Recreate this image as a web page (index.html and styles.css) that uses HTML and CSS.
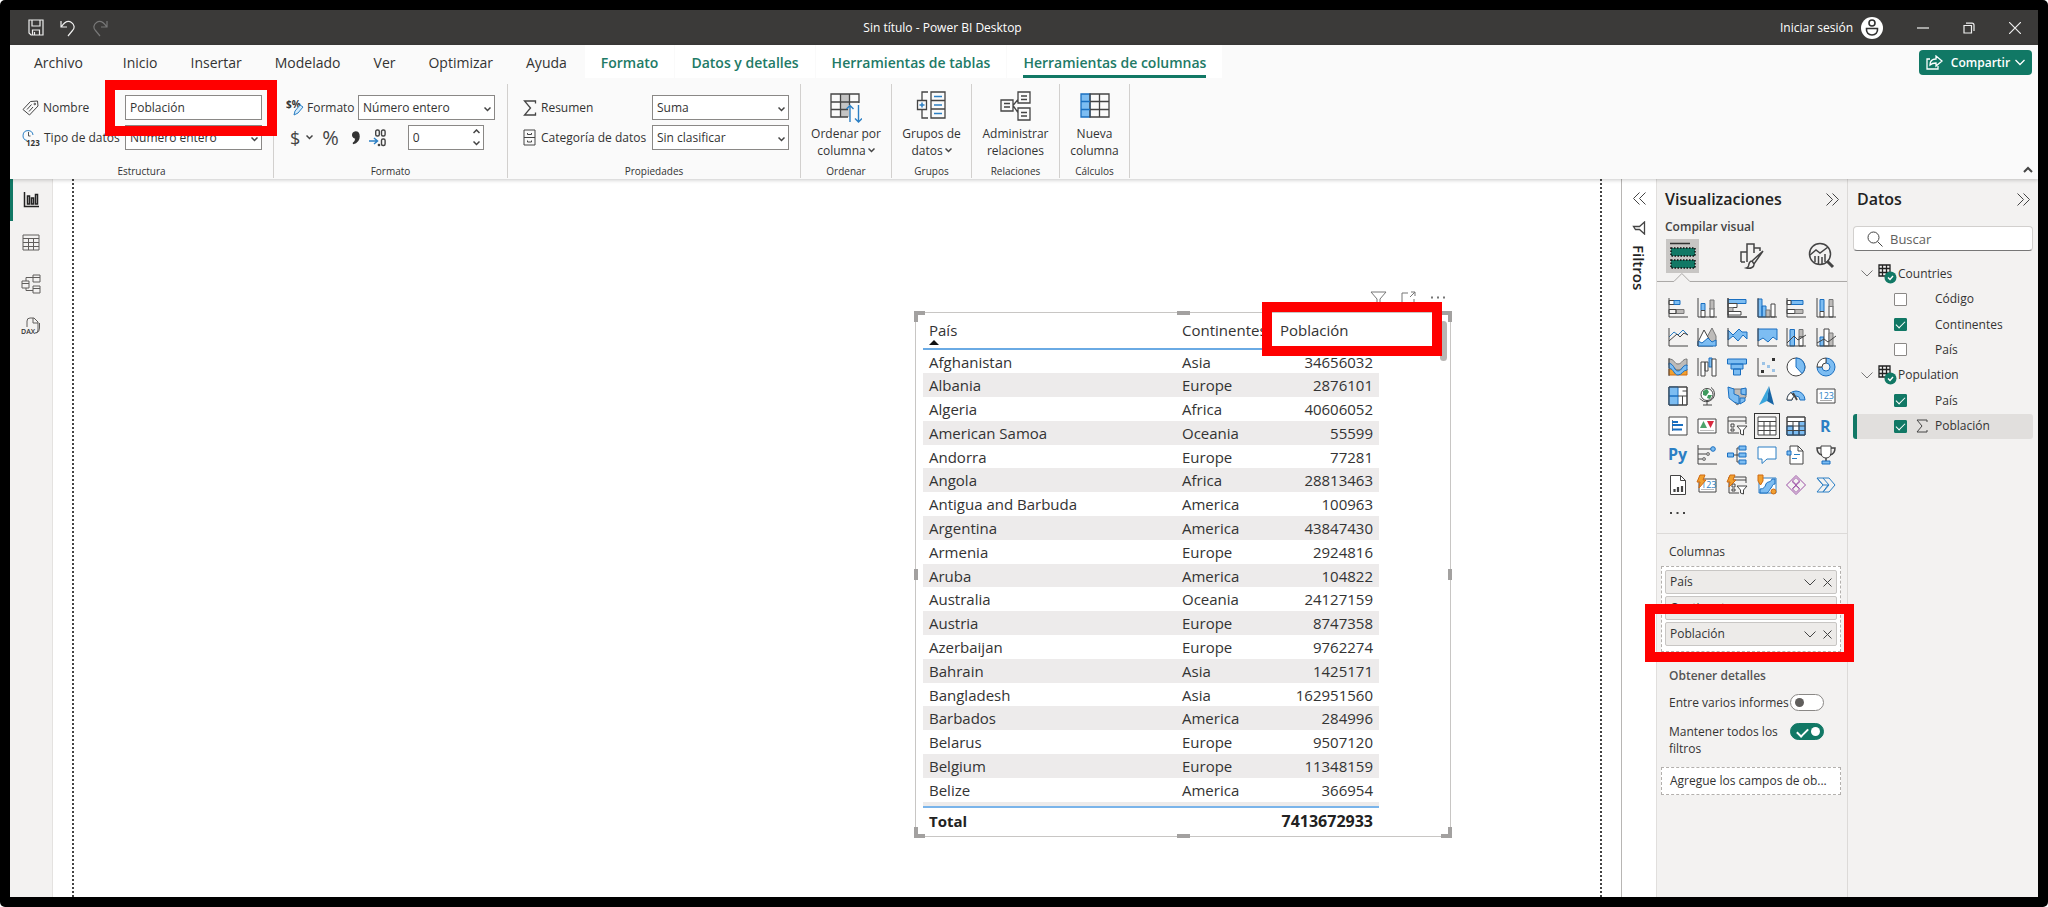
FILE: index.html
```html
<!DOCTYPE html>
<html lang="es">
<head>
<meta charset="utf-8">
<title>Sin título - Power BI Desktop</title>
<link rel="stylesheet" href="styles.css">
</head>
<body>
<div class="window">
  <header class="titlebar">
    <div class="quick">
      <button aria-label="Guardar"><svg width="16" height="17" viewBox="0 0 16 17"><path d="M1 1h14v15H3l-2-2zM4 1v6h8V1M4.500 16v-5h7v5M6.500 13v3"/></svg></button>
      <button aria-label="Deshacer"><svg width="16" height="18" viewBox="0 0 16 18"><path d="M1 2v6h6M1.500 7.500C5 2.500 8.500 1.500 11.500 3.500c3 2 3.500 5.500 1 8L8 17"/></svg></button>
      <button aria-label="Rehacer" class="dim"><svg width="16" height="18" viewBox="0 0 16 18"><path d="M15 2v6H9M14.500 7.500C11 2.500 7.500 1.500 4.500 3.500c-3 2-3.500 5.500-1 8L8 17"/></svg></button>
    </div>
    <h1>Sin título - Power BI Desktop</h1>
    <div class="account">
      <button class="signin">Iniciar sesión
        <svg width="22" height="22" viewBox="0 0 22 22"><circle cx="11" cy="11" r="11" fill="#fff" stroke="none"/><g stroke="#333" stroke-width="1.600"><circle cx="11" cy="6" r="3"/><path d="M5.500 11.500h11c.5 4-2 6.500-5.500 6.500s-6-2.500-5.500-6.500z"/></g></svg></button>
      <button aria-label="Minimizar"><svg width="12" height="12" viewBox="0 0 12 12"><path d="M0 6h12"/></svg></button>
      <button aria-label="Restaurar"><svg width="12" height="12" viewBox="0 0 12 12"><path d="M1 3.500h7.500V11H1zM3 1.200h6q2 0 2 2V9"/></svg></button>
      <button aria-label="Cerrar"><svg width="12" height="12" viewBox="0 0 12 12"><path d="M0 0l12 12M12 0L0 12"/></svg></button>
    </div>
  </header>

  <div class="ribbon">
    <nav class="tabs">
      <a href="#" class="file">Archivo</a><a href="#">Inicio</a><a href="#">Insertar</a><a href="#">Modelado</a><a href="#">Ver</a><a href="#">Optimizar</a><a href="#">Ayuda</a>
      <a href="#" class="ctx">Formato</a><a href="#" class="ctx">Datos y detalles</a><a href="#" class="ctx">Herramientas de tablas</a><a href="#" class="ctx current"><span>Herramientas de columnas</span></a>
      <button class="share"><svg width="17" height="15" viewBox="0 0 17 15"><path d="M4 4H1v10h11v-3M4 10c0-4 2.500-6 6-6V1l6 5-6 5V8c-3 0-4.500.500-6 2z"/></svg>Compartir<svg width="10" height="7" viewBox="0 0 10 7"><path d="M.5 1L5 5.500 9.500 1"/></svg></button>
    </nav>
    <div class="groups">
      <section class="group structure">
        <div class="fields">
          <label for="f-name"><svg width="17" height="16" viewBox="0 0 17 16"><path d="M1 9.500L8.500 1.500l7-.5.5 5-8.500 9zM5 9.500l4.500-5M7 11.500l4-4.500"/><circle cx="12.800" cy="4" r=".8"/></svg>Nombre</label>
          <span class="mark-wrap"><input id="f-name" type="text" value="Población"><i class="mark mark-name"></i></span>
          <label for="f-type"><svg width="18" height="18" viewBox="0 0 18 18"><path d="M5 11.500A5 5 0 1 1 11 6" stroke="#2b7fc4"/><path d="M6.500 3v4h2" stroke="#555"/><text x="4" y="16.500" class="t123">123</text></svg>Tipo de datos</label>
          <span class="sel"><select id="f-type"><option>Número entero</option></select><svg width="7" height="5" viewBox="0 0 7 5"><path d="M.5.5l3 3 3-3"/></svg></span>
        </div>
        <h2>Estructura</h2>
      </section>
      <section class="group format">
        <div class="line">
          <label for="f-format"><svg width="18" height="19" viewBox="0 0 18 19"><text x="0" y="10" class="tdol">$%</text><path d="M8 17l1-4 5-6 3 2-5 6z" fill="#d5ebfb" stroke="#2b7fc4"/></svg>Formato</label>
          <span class="sel"><select id="f-format"><option>Número entero</option></select><svg width="7" height="5" viewBox="0 0 7 5"><path d="M.5.5l3 3 3-3"/></svg></span>
        </div>
        <div class="line numbers">
          <button class="money">$<svg width="7" height="5" viewBox="0 0 7 5"><path d="M.5.5l3 3 3-3"/></svg></button>
          <button class="percent">%</button>
          <button aria-label="Separador de miles"><svg width="9" height="14" viewBox="0 0 9 14"><path d="M4.500 1a3 3 0 1 0 .500 6C5 9.500 3.500 11.500 2 12.500 6 11.500 8 8.500 8 5.500 8 2.500 6.500 1 4.500 1z" fill="#333" stroke="#333"/></svg></button>
          <button aria-label="Decimales"><svg width="17" height="18" viewBox="0 0 17 18"><g stroke="#444" stroke-width="1.400"><rect x="6.700" y="1" width="3.600" height="6" rx="1.500"/><rect x="12.500" y="1" width="3.600" height="6" rx="1.500"/><rect x="12.500" y="10" width="3.600" height="6.500" rx="1.500"/></g><path d="M0 12h8M5 9l3.500 3L5 15" stroke="#2b7fc4"/><circle cx="10" cy="16" r=".6"/></svg></button>
          <span class="spin"><input type="text" value="0" aria-label="Posiciones decimales"><span><svg width="7" height="5" viewBox="0 0 7 5"><path d="M.5 4l3-3 3 3"/></svg><svg width="7" height="5" viewBox="0 0 7 5"><path d="M.5.5l3 3 3-3"/></svg></span></span>
        </div>
        <h2>Formato</h2>
      </section>
      <section class="group props">
        <div class="fields">
          <label for="f-sum"><svg width="14" height="16" viewBox="0 0 14 16"><path d="M12.500 3.500V1H1.500L7.500 8l-6 7h11v-2.500" stroke-width="1.300"/></svg>Resumen</label>
          <span class="sel"><select id="f-sum"><option>Suma</option></select><svg width="7" height="5" viewBox="0 0 7 5"><path d="M.5.5l3 3 3-3"/></svg></span>
          <label for="f-cat"><svg width="14" height="17" viewBox="0 0 14 17"><path d="M1 1h11v15H1zM1 8.500h11M4.500 4v1.500h4V4M4.500 11.500V13h4v-1.500"/></svg>Categoría de datos</label>
          <span class="sel"><select id="f-cat"><option>Sin clasificar</option></select><svg width="7" height="5" viewBox="0 0 7 5"><path d="M.5.5l3 3 3-3"/></svg></span>
        </div>
        <h2>Propiedades</h2>
      </section>
      <section class="group g-sort">
        <button class="big"><svg width="32" height="34" viewBox="0 0 32 34"><path d="M10.500 3h9v23h-9z" fill="#c4c4c4" stroke="none"/><path d="M18 26H1V3h28v9M1 11h28M1 18.500h17M10.500 3v23M19.500 3v11"/><path d="M20 31V14.500M16.500 18l3.500-3.500 3.500 3.500M28.500 14v17M25 27.500l3.500 3.500 3.500-3.500" stroke="#2b7fc4" stroke-width="1.400"/></svg><span>Ordenar por<br>columna<svg width="7" height="5" viewBox="0 0 7 5"><path d="M.5.5l3 3 3-3"/></svg></span></button>
        <h2>Ordenar</h2>
      </section>
      <section class="group g-groups">
        <button class="big"><svg width="32" height="34" viewBox="0 0 32 34"><path d="M12 1H6v8M12 27H6v-8M15 1h14v26H15zM15 9.500h14M15 18h14" /><path d="M1.500 9.500h9v9h-9z" /><path d="M6 11.500v5M3.500 14h5M18 5.500h8M18 14h8M18 22.500h8" stroke="#2b7fc4" stroke-width="1.500"/></svg><span>Grupos de<br>datos<svg width="7" height="5" viewBox="0 0 7 5"><path d="M.5.5l3 3 3-3"/></svg></span></button>
        <h2>Grupos</h2>
      </section>
      <section class="group g-rel">
        <button class="big"><svg width="32" height="34" viewBox="0 0 32 34"><path d="M1 9h12v11H1zM18 1h12v11H18zM18 17h12v12H18zM13 14.500l5-6M13 14.500l5 7M4 12.500h6M4 16h6M21 5h6M21 8.500h6M21 21.500h6M21 25h6"/></svg><span>Administrar<br>relaciones</span></button>
        <h2>Relaciones</h2>
      </section>
      <section class="group g-new">
        <button class="big"><svg width="32" height="34" viewBox="0 0 32 34"><path d="M2 3h9v23H2z" fill="#7dbdf2" stroke="#1a6fc0"/><path d="M11 3h19v23H11zM11 10.500h19M11 18.500h19M20.500 3v23"/><path d="M2 10.500h9M2 18.500h9" stroke="#1a6fc0"/></svg><span>Nueva<br>columna</span></button>
        <h2>Cálculos</h2>
      </section>
      <button class="collapse" aria-label="Contraer la cinta"><svg width="10" height="7" viewBox="0 0 10 7"><path d="M1 6l4-4 4 4" stroke-width="2"/></svg></button>
    </div>
  </div>

  <main class="work">
    <nav class="views">
      <a href="#" class="on" aria-label="Informe"><svg width="17" height="16" viewBox="0 0 17 16"><path d="M1.500 0v14.500H16M4.500 4h2v8h-2zM8.500 6h2v6h-2zM12.500 2.500h2V12h-2z" stroke="#222" stroke-width="1.500"/></svg></a>
      <a href="#" aria-label="Tabla"><svg width="18" height="17" viewBox="0 0 18 17"><path d="M1 1h16v15H1zM1 4.500h16M1 8.500h16M1 12.500h16M6.500 4.500V16M11.500 4.500V16"/></svg></a>
      <a href="#" aria-label="Modelo"><svg width="20" height="20" viewBox="0 0 20 20"><path d="M1 7h7v7H1zM1 9.500h7M12 1h7v7h-7zM12 3.500h7M12 12h7v7h-7zM12 14.500h7M5 7V3.500h7M5 14v2.500h7"/></svg></a>
      <a href="#" aria-label="Consultas DAX"><svg width="20" height="18" viewBox="0 0 20 18"><path d="M6 10V4q0-3 3-3h4l4 4v8q0 3-3 3M12 1v5h5M18.500 6v5q0 4-3 5"/><text x="0" y="17" class="tdax">DAX</text></svg></a>
    </nav>

    <section class="canvas">
      <div class="page"></div>
      <article class="visual">
        <div class="tools">
          <svg width="17" height="16" viewBox="0 0 17 16"><path d="M1 1h15l-6 7v6l-3-2V8z"/></svg>
          <svg width="15" height="13" viewBox="0 0 15 13"><path d="M7 2H1v10h12V8M10 1h4v4M14 1L9 6"/></svg>
          <svg width="16" height="13" viewBox="0 0 16 13"><path d="M1 6.500h2M7 6.500h2M13 6.500h2" stroke-width="2"/></svg>
        </div>
        <table>
          <thead><tr><th class="c1">País<svg width="10" height="5" viewBox="0 0 10 5"><path d="M0 5l5-5 5 5z" fill="#111" stroke="none"/></svg></th><th class="c2">Continentes</th><th class="c3">Población</th></tr></thead>
          <tbody>
            <tr><td>Afghanistan</td><td>Asia</td><td>34656032</td></tr>
            <tr><td>Albania</td><td>Europe</td><td>2876101</td></tr>
            <tr><td>Algeria</td><td>Africa</td><td>40606052</td></tr>
            <tr><td>American Samoa</td><td>Oceania</td><td>55599</td></tr>
            <tr><td>Andorra</td><td>Europe</td><td>77281</td></tr>
            <tr><td>Angola</td><td>Africa</td><td>28813463</td></tr>
            <tr><td>Antigua and Barbuda</td><td>America</td><td>100963</td></tr>
            <tr><td>Argentina</td><td>America</td><td>43847430</td></tr>
            <tr><td>Armenia</td><td>Europe</td><td>2924816</td></tr>
            <tr><td>Aruba</td><td>America</td><td>104822</td></tr>
            <tr><td>Australia</td><td>Oceania</td><td>24127159</td></tr>
            <tr><td>Austria</td><td>Europe</td><td>8747358</td></tr>
            <tr><td>Azerbaijan</td><td>Europe</td><td>9762274</td></tr>
            <tr><td>Bahrain</td><td>Asia</td><td>1425171</td></tr>
            <tr><td>Bangladesh</td><td>Asia</td><td>162951560</td></tr>
            <tr><td>Barbados</td><td>America</td><td>284996</td></tr>
            <tr><td>Belarus</td><td>Europe</td><td>9507120</td></tr>
            <tr><td>Belgium</td><td>Europe</td><td>11348159</td></tr>
            <tr><td>Belize</td><td>America</td><td>366954</td></tr>
            <tr class="cut"><td></td><td></td><td></td></tr>
          </tbody>
          <tfoot><tr><td>Total</td><td></td><td>7413672933</td></tr></tfoot>
        </table>
        <i class="thumb"></i>
        <i class="h tl"></i><i class="h tr"></i><i class="h bl"></i><i class="h br"></i><i class="h tm"></i><i class="h bm"></i><i class="h lm"></i><i class="h rm"></i>
        <i class="mark mark-column"></i>
      </article>
    </section>

    <aside class="filters">
      <button aria-label="Expandir"><svg width="13" height="13" viewBox="0 0 13 13"><path d="M6.500.5l-6 6 6 6M12.500.5l-6 6 6 6"/></svg></button>
      <svg width="14" height="14" viewBox="0 0 14 14"><path d="M12.500 1v12L7.500 8.500H3.500L1.500 5.500h6z" stroke-width="1.300"/></svg>
      <h2>Filtros</h2>
    </aside>

    <aside class="viz">
      <header><h2>Visualizaciones</h2><button aria-label="Contraer"><svg width="13" height="13" viewBox="0 0 13 13"><path d="M.5.5l6 6-6 6M6.500.5l6 6-6 6"/></svg></button></header>
      <h3>Compilar visual</h3>
      <div class="modes">
        <button class="on" aria-label="Campos"><svg width="28" height="28" viewBox="0 0 28 28"><path d="M1 1.500h20" stroke="#333" stroke-width="1.500"/><path d="M2 6h24v8H2zM2 18h24v8H2z" fill="#117865" stroke="#111" stroke-width="1.500" stroke-dasharray="1.500 1.500"/></svg></button>
        <button aria-label="Formato"><svg width="26" height="28" viewBox="0 0 26 28"><path d="M2 20V10h6V2h7v9M8 10v10M15 6h6v3M2 20h4M24 9L13 19l2 3L24 9zM13 19c-3 0-3 3-3.500 5-.5 1.500-2 2-2 2 4 1 8-1 7.500-4"/></svg></button>
        <button aria-label="Análisis"><svg width="28" height="28" viewBox="0 0 28 28"><circle cx="13" cy="12" r="10.500"/><path d="M3 13l6-5 4 3 8-6M8 20v-6M11.500 22v-8M15 22v-7M18 20v-8" /><path d="M20 19l6 6" stroke-width="3"/></svg></button>
      </div>
      <svg class="pointer" width="191" height="11" viewBox="0 0 191 11" aria-hidden="true"><path d="M0 9.500h17l8-8 8 8h158" stroke="#a8a6a4"/></svg>
      <div class="gallery">
        <svg viewBox="0 0 20 20"><path class="w" d="M1 2.500h6v4H1z"/><path class="f" d="M6 2.500h6v4H6z"/><path class="g" d="M8 11.500h8v4H8z"/><path d="M1 11.500h7v4H1zM1 0v19h19"/></svg>
        <svg viewBox="0 0 20 20"><path class="f" d="M4 5.500h4v7H4z"/><path d="M4 12.500h4V19H4zM13 10h4v9h-4z" class="w"/><path class="g" d="M13 2h4v9h-4z"/><path d="M1 0v19h19"/></svg>
        <svg viewBox="0 0 20 20"><path class="f" d="M1 1.500h18v4H1z"/><path class="w" d="M1 5.500h9v4H1z"/><path class="g" d="M1 9.500h5v4H1z"/><path class="w" d="M1 13.500h13V17H1z"/><path d="M1 0v19h19" stroke-width="1.500"/></svg>
        <svg viewBox="0 0 20 20"><path class="f" d="M1 1h4v18H1zM5 8h4v11H5z"/><path class="g" d="M9 12h4v7H9z"/><path class="w" d="M14 6h4v13h-4z"/><path d="M1 0v19h19"/></svg>
        <svg viewBox="0 0 20 20"><path class="f" d="M5 2.500h12v4H5z"/><path class="w" d="M1 2.500h4v4H1zM1 11.500h8v4H1z"/><path class="g" d="M9 11.500h8v4H9z"/><path d="M1 0v19h19"/></svg>
        <svg viewBox="0 0 20 20"><path class="f" d="M4 1.500h4v12H4z"/><path class="w" d="M4 13.500h4V19H4zM13 8h4v11h-4z"/><path class="g" d="M13 1.500h4v7h-4z"/><path d="M1 0v19h19"/></svg>

        <svg viewBox="0 0 20 20"><path d="M1 10l5-5 4 3 5-5 5 5" stroke="#2b7fc4"/><path d="M1 14l8-7 3 3 4-4 4 2M1 1v18h19"/></svg>
        <svg viewBox="0 0 20 20"><path class="g" d="M9 12L15 1l4 8v10z"/><path class="w" d="M1 15L7 3l9 16H1z"/><path class="f" d="M1 14l4 2 6-5 4 4 4-2v6H1z"/><path d="M1 1v18"/></svg>
        <svg viewBox="0 0 20 20"><path class="f" d="M1 3l5 5 6-6 3 3h5v7l-4-4-5 6-5-5-5 4z"/><path d="M1 1v18h19"/></svg>
        <svg viewBox="0 0 20 20"><path class="f" d="M1 2h19v11l-4-3-5 5-5-4-5 3z"/><path d="M1 1v18h19"/></svg>
        <svg viewBox="0 0 20 20"><path class="f" d="M4 2.500h4.500V19H4z"/><path class="g" d="M13 2.500h4V10h-4z"/><path class="w" d="M13 10h4v9h-4z"/><path d="M1 1v18h19M1 16l7-7 4 4 8-5"/></svg>
        <svg viewBox="0 0 20 20"><path class="f" d="M4 10h4v9H4z"/><path class="w" d="M8 2h5v17H8z"/><path class="g" d="M13 6h4v13h-4z"/><path d="M1 1v18h19M1 16l7-4 4 3 8-6"/></svg>

        <svg viewBox="0 0 20 20"><path class="o" d="M1 12h18v6H1z"/><path class="g" d="M1 2c6 0 5 5 9 5s4-5 9-5v7c-5 0-5 4-9 4S6 8 1 8z"/><path class="f" d="M1 6c6 2 5 8 9 8s4-6 9-6v5c-4 0-5 5-9 5s-4-6-9-7z"/><path d="M1 1v18"/></svg>
        <svg viewBox="0 0 20 20"><path class="w" d="M4 5h4v14H4zM8 5h3v9H8z"/><path class="f" d="M12 1h3v9h-3z"/><path class="w" d="M15 2h4v17h-4z"/><path d="M1 1v18"/></svg>
        <svg viewBox="0 0 20 20"><path class="f" d="M.5 2h19v5H.5zM4 7h12v5H4zM6.500 12h7v6h-7z"/></svg>
        <svg viewBox="0 0 20 20"><path d="M1 1v18h19"/><path d="M15 1h3v3h-3zM4 13h3v3H4z" fill="#333" stroke="none"/><path d="M5 5h3v3H5zM10 8h3v3h-3zM15 12h3v3h-3z" fill="#9cc3e6" stroke="none"/></svg>
        <svg viewBox="0 0 20 20"><circle cx="10" cy="10" r="9" class="w"/><path class="f" d="M10 1a9 9 0 0 1 6 15.500L10 10z"/></svg>
        <svg viewBox="0 0 20 20"><path class="f" d="M10 1a9 9 0 1 1-9 9h5a4 4 0 1 0 4-4z"/><path class="w" d="M10 1a9 9 0 0 0-9 9h5a4 4 0 0 1 4-4z"/></svg>

        <svg viewBox="0 0 20 20"><path class="w" d="M1 1h18v18H1z"/><path class="f" d="M1 1h9v9H1zM1 10h9v9H1z"/><path d="M10 10h9M14.500 10v9M14.500 5H19M1 1h18v18H1z"/></svg>
        <svg viewBox="0 0 20 20"><circle cx="10" cy="8.500" r="6" fill="#fff"/><path d="M6 5l4-2 2 3-3 4-3-1zM11 9h4l-2 4-3-1z" fill="#3e9a5c" stroke="none"/><path d="M14 1.500c5 3 5 12-3 14-4 .5-6-.5-8-3M10 15.500V19M6 19h9"/></svg>
        <svg viewBox="0 0 20 20"><path class="g" d="M6 3h13v8l-5 5-4 3-4-5z"/><path class="f" d="M1 1l6 2v5l5 2v8l-5-2-5-4zM14 3l5-1v7l-5-1zM13 12h5v3l-5 3z"/></svg>
        <svg viewBox="0 0 20 20"><path d="M12 0l5 19-7-4z" fill="#1765a5" stroke="none"/><path d="M12 0L2 19l8-4z" fill="#3aa6dd" stroke="none"/></svg>
        <svg viewBox="0 0 20 20"><path class="f" d="M1 14a9 9 0 0 1 18 0h-5a4 4 0 0 0-8 0z"/><path class="w" d="M1 14a9 9 0 0 1 4-7.500L8 10.500A4 4 0 0 0 6 14z"/><path d="M11 14L7 7" stroke-width="1.800"/></svg>
        <svg viewBox="0 0 20 20"><path class="w" d="M1 3h18v14H1z"/><path d="M4 14.500h12" stroke="#aaa"/><text x="2.500" y="12.500" class="n">123</text></svg>

        <svg viewBox="0 0 20 20"><path class="w" d="M1 1h18v18H1z"/><path d="M4.500 4v11" stroke="#777"/><path d="M4 6h6M4 9h11M4 13.500h10" stroke="#1a6fc0" stroke-width="1.800"/></svg>
        <svg viewBox="0 0 20 20"><path class="w" d="M1 3h18v14H1z"/><path d="M3 12l3.500-7 3.500 7z" fill="#4da36b" stroke="none"/><path d="M10 5h7l-3.500 7z" fill="#d8293f" stroke="none"/><path d="M3 14.500h14" stroke="#bbb"/></svg>
        <svg viewBox="0 0 20 20"><path d="M12 17H1V1h18v7M1 5h18M4 8h3v3H4zM4 13h3v2H4z"/><path class="w" d="M10 10h10l-3.500 4v5l-3-1v-4z"/></svg>
        <svg viewBox="0 0 20 20" class="picked"><path class="w" d="M1 1h18v18H1z"/><path d="M1 5.500h18M1 10h18M1 14.500h18M7 5.500V19M13 5.500V19"/></svg>
        <svg viewBox="0 0 20 20"><path class="w" d="M1 1h18v18H1z"/><path class="f" d="M1 10h6v9H1zM7 14.500h6V19H7zM13 5.500h6V19h-6z"/><path d="M1 5.500h18M1 10h18M1 14.500h18M7 5.500V19M13 5.500V19M1 1h18v18H1z"/></svg>
        <svg viewBox="0 0 20 20"><text x="4" y="15.500" class="r">R</text></svg>

        <svg viewBox="0 0 20 20"><text x="0" y="15" class="r">Py</text></svg>
        <svg viewBox="0 0 20 20"><path d="M1 0v19h19M1 4h13M1 9h9M1 14h5"/><circle cx="16" cy="4" r="2.300" class="f"/><circle cx="11" cy="9" r="1.500" class="g"/><circle cx="7" cy="14" r="1.500" class="g"/></svg>
        <svg viewBox="0 0 20 20"><path d="M6 10h6M10 3v14M10 3h3M10 17h3"/><path class="f" d="M.5 8h6v4h-6zM12 1h7v4h-7zM12 8h7v4h-7zM12 15h7v4h-7z"/></svg>
        <svg viewBox="0 0 20 20"><path d="M1 2h18v12H10l-5 4.500V14H1z" fill="#fff" stroke="#2b7fc4"/></svg>
        <svg viewBox="0 0 20 20"><path class="w" d="M4 1h8l5 5v13H4z"/><path d="M12 1v5h5"/><path class="f" d="M1 6h4v4H1z"/><path d="M8 9.500h6M6 13.500h5" stroke="#2b7fc4"/></svg>
        <svg viewBox="0 0 20 20"><path class="w" d="M5 1h10v7c0 3-2 5-5 5s-5-2-5-5z"/><path d="M5 3H1c0 4 1 6 5 7M15 3h4c0 4-1 6-5 7M10 13v3" stroke-width="1.500"/><path class="f" d="M6 16h8v3H6z"/></svg>

        <svg viewBox="0 0 20 20"><path class="w" d="M2.500.5h10l5 5V19.500h-15z"/><path d="M12.500.5v5h5"/><path d="M6.500 17v-3M10 17V12M14 17v-6" stroke-width="2.200"/></svg>
        <svg viewBox="0 0 20 20"><path class="w" d="M2 4h17v13H2z"/><path d="M4 14.500h13" stroke="#bbb"/><text x="4" y="13" class="n">123</text><path class="o" d="M3 0h5L6 5h3l-7 8 1-6H0z"/></svg>
        <svg viewBox="0 0 20 20"><path d="M12 18H2V2h17v6M6 5h13M5 9h3v3H5zM5 14h3v2H5z"/><path class="w" d="M10 11h10l-3.500 4v4l-3-1v-3z"/><path class="o" d="M3 0h5L6 5h3l-7 7 1-5H0z"/></svg>
        <svg viewBox="0 0 20 20"><path d="M2 3h17v15H2z" fill="#fff" stroke="#2b7fc4"/><path class="f" d="M3 14c4 0 5-2 6-5s5-1 6-5h3v5c-3 0-2 2-4 4s-1 3-4 5H3z" stroke="none"/><path class="o" d="M1 0h5v6l-2.500 4L1 6z"/><circle cx="16.500" cy="16.500" r="2.500" class="o"/></svg>
        <svg viewBox="0 0 20 20"><path d="M10 .5l9.500 9.500-9.500 9.500L.5 10zM6 6.500l7.500 7M14 6.500l-7.500 7" stroke="#9b4fa5"/><path d="M10 2.500l3.500 3.500-3.500 3.500L6.500 6zM10 10.500l3.500 3.500-3.500 3.500L6.500 14z" stroke="#9b4fa5"/></svg>
        <svg viewBox="0 0 20 20"><path d="M1 3h12l6 7-6 7H1l6-7zM7 10h5l-5 7M1 3l6 7" stroke="#2b7fc4"/><path d="M7 3l6 7-6 7" stroke="#2b7fc4"/></svg>

        <svg viewBox="0 0 20 20"><path d="M2 9h2M8.500 9h2M15 9h2" stroke-width="2"/></svg>
      </div>
      <div class="wells">
        <h4>Columnas</h4>
        <div class="well">
          <div class="item">País<svg width="12" height="7" viewBox="0 0 12 7"><path d="M.5.5L6 6l5.500-5.500"/></svg><svg width="9" height="9" viewBox="0 0 9 9"><path d="M.5.5l8 8M8.500.5l-8 8"/></svg></div>
          <div class="item">Continentes<svg width="12" height="7" viewBox="0 0 12 7"><path d="M.5.5L6 6l5.500-5.500"/></svg><svg width="9" height="9" viewBox="0 0 9 9"><path d="M.5.5l8 8M8.500.5l-8 8"/></svg></div>
          <div class="item">Población<svg width="12" height="7" viewBox="0 0 12 7"><path d="M.5.5L6 6l5.500-5.500"/></svg><svg width="9" height="9" viewBox="0 0 9 9"><path d="M.5.5l8 8M8.500.5l-8 8"/></svg></div>
          <i class="mark mark-well"></i>
        </div>
        <h4 class="strong">Obtener detalles</h4>
        <label class="toggle">Entre varios informes<input type="checkbox" role="switch"></label>
        <label class="toggle two"><span>Mantener todos los filtros</span><input type="checkbox" role="switch" checked></label>
        <div class="drop">Agregue los campos de ob...</div>
      </div>
    </aside>

    <aside class="data">
      <header><h2>Datos</h2><button aria-label="Contraer"><svg width="13" height="13" viewBox="0 0 13 13"><path d="M.5.5l6 6-6 6M6.500.5l6 6-6 6"/></svg></button></header>
      <label class="search"><svg width="16" height="16" viewBox="0 0 16 16"><circle cx="6.500" cy="6.500" r="5.500"/><path d="M10.500 10.500l5 5"/></svg><input type="text" placeholder="Buscar" aria-label="Buscar"></label>
      <div class="tree">
        <div class="node"><svg width="12" height="7" viewBox="0 0 12 7"><path d="M.5.5L6 6l5.500-5.500"/></svg><svg width="19" height="20" viewBox="0 0 19 20"><path d="M1 1h11v11H1zM1 4.500h11M1 8.500h11M4.500 1v11M8.500 1v11" stroke="#222" stroke-width="1.300"/><circle cx="12.500" cy="13.500" r="6" fill="#117865" stroke="none"/><path d="M10 13.500l2 2 3-3.500" stroke="#fff" stroke-width="1.400"/></svg>Countries</div>
        <label class="leaf"><input type="checkbox"><i></i>Código</label>
        <label class="leaf"><input type="checkbox" checked><i></i>Continentes</label>
        <label class="leaf"><input type="checkbox"><i></i>País</label>
        <div class="node"><svg width="12" height="7" viewBox="0 0 12 7"><path d="M.5.5L6 6l5.500-5.500"/></svg><svg width="19" height="20" viewBox="0 0 19 20"><path d="M1 1h11v11H1zM1 4.500h11M1 8.500h11M4.500 1v11M8.500 1v11" stroke="#222" stroke-width="1.300"/><circle cx="12.500" cy="13.500" r="6" fill="#117865" stroke="none"/><path d="M10 13.500l2 2 3-3.500" stroke="#fff" stroke-width="1.400"/></svg>Population</div>
        <label class="leaf"><input type="checkbox" checked><i></i>País</label>
        <label class="leaf selected"><input type="checkbox" checked><i><svg width="12" height="14" viewBox="0 0 12 14"><path d="M11 3V1H1l5 6-5 6h10v-2"/></svg></i>Población</label>
      </div>
    </aside>
  </main>
</div>
</body>
</html>
```
FILE: styles.css
```css
* { box-sizing: border-box; }
html { background: #fff; }
body {
  margin: 0;
  height: 100vh;
  padding: 10px;
  background: #000;
  border-radius: 5px;
  color: #333;
  font: 12px/16px "Open Sans", "Noto Sans", sans-serif;
}
h1, h2, h3, h4 { margin: 0; font-size: inherit; font-weight: 400; }
a { color: inherit; text-decoration: none; }
button, input, select { font: inherit; color: inherit; }
button { border: 0; padding: 0; background: none; display: flex; align-items: center; }
svg { fill: none; stroke: #444; flex: none; display: block; }
svg text { stroke: none; fill: #333; font-family: "Open Sans", sans-serif; }
i { font-style: normal; }

.window { height: 100%; display: flex; flex-direction: column; background: #fff; }

.titlebar {
  display: grid;
  grid-template-columns: 1fr auto 1fr;
  align-items: center;
  height: 35px;
  padding: 0 17px 0 18px;
  background: #3b3a39;
  color: #fff;
}
.titlebar svg { stroke: #eee; stroke-width: 1.2; }
.titlebar .dim svg { stroke: #777; }
.quick { display: flex; gap: 16px; }
.titlebar h1 { padding-right: 164px; }
.account { display: flex; justify-content: flex-end; align-items: center; gap: 34px; }
.signin { gap: 8px; }

.ribbon { position: relative; z-index: 2; background: #fafafa; box-shadow: 0 1px 4px rgba(0, 0, 0, .22); }
.tabs { display: flex; padding-left: 8px; height: 33px; font-size: 14px; }
.tabs a { height: 33px; padding: 10px 17px 0 16px; white-space: nowrap; }
.tabs .file { padding-right: 24px; }
.tabs .ctx { margin-left: 1px; padding: 10px 16px 0; background: #fff; color: #217a66; font-weight: 600; }
.tabs .current span { display: block; height: 23px; border-bottom: 3px solid #117865; }
.share {
  margin: 5px 6px 3px auto;
  width: 113px;
  justify-content: center;
  border-radius: 4px;
  background: #117865;
  color: #fff;
  font-size: 12px;
  font-weight: 600;
}
.share svg { stroke: #fff; stroke-width: 1.3; }
.share svg:first-child { margin-right: 8px; }
.share svg:last-child { margin-left: 5px; }

.groups { display: flex; padding: 6px 0 1px; height: 101px; }
.group {
  display: flex;
  flex-direction: column;
  border-right: 1px solid #d2d0ce;
}
.group h2 { margin-top: auto; font-size: 10px; line-height: 14px; text-align: center; }
.fields { display: grid; row-gap: 5px; align-items: center; padding-top: 11px; }
.structure { width: 264px; }
.structure .fields { grid-template-columns: 103px 137px; padding-left: 12px; }
.fields label, .line label { display: flex; align-items: center; gap: 4px; white-space: nowrap; }
.group input, .group select {
  display: block;
  width: 137px;
  height: 25px;
  padding: 0 4px;
  border: 1px solid #8a8886;
  border-radius: 0;
  background: #fff;
  appearance: none;
}
.sel, .mark-wrap { position: relative; display: block; }
.sel svg { position: absolute; right: 4px; top: 12px; stroke-width: 1.5; pointer-events: none; }
.t123 { font-size: 8px; font-weight: 700; }
.tdol { font-size: 10px; font-weight: 700; }
.tdax { font-size: 7px; font-weight: 600; }

.format { width: 234px; padding: 11px 12px 0; }
.line { display: flex; justify-content: space-between; align-items: center; margin-bottom: 5px; height: 25px; }
.line label { gap: 3px; }
.numbers { justify-content: flex-start; gap: 9px; padding-left: 4px; }
.numbers button { font-size: 18px; color: #444; }
.numbers .percent { font-size: 20px; }
.money svg { margin-left: 6px; }
.percent + button { margin-left: 3px; }
.spin { position: relative; margin-left: 13px; }
.group .spin input { width: 76px; }
.spin > span { position: absolute; right: 4px; top: 4px; display: grid; gap: 7px; }
.numbers svg { stroke-width: 1.5; }

.props { width: 293px; }
.props .fields { grid-template-columns: 129px 137px; padding-left: 15px; }
.g-sort { width: 91px; }
.g-groups { width: 80px; }
.g-rel { width: 88px; }
.g-new { width: 70px; }
.big { flex-direction: column; padding-top: 7px; line-height: 17px; text-align: center; white-space: nowrap; }
.big > svg { stroke-width: 1.3; }
.big span svg { display: inline-block; margin-left: 2px; vertical-align: 2px; stroke-width: 1.5; }
.collapse { margin: auto 5px 5px auto; }

.work { flex: 1; min-height: 0; display: flex; }
.views { width: 43px; background: #f3f2f1; border-right: 1px solid #e4e2e0; display: flex; flex-direction: column; }
.views a { height: 42px; display: grid; place-items: center; }
.views .on { border-left: 3px solid #117865; padding-right: 3px; }
.views svg { stroke: #605e5c; }

.canvas { position: relative; flex: 1; min-width: 0; display: flex; overflow: hidden; }
.page { flex: 1; margin: 0 19px; border: 2px dotted #444; border-width: 0 2px; }
.visual {
  position: absolute;
  top: 133px;
  right: 170px;
  width: 536px;
  padding: 0 0 3px 7px;
  border: 1px solid #c8c6c4;
}
.tools { position: absolute; right: 4px; bottom: 100%; display: flex; gap: 14px; padding-bottom: 6px; }
.tools svg { stroke: #777; }
.visual table { width: 456px; table-layout: fixed; border-collapse: collapse; font-size: 15px; line-height: 20px; color: #333; }
.visual th { position: relative; height: 36px; padding: 0 6px 2px; border-bottom: 2px solid #6aaae4; text-align: left; font-weight: 400; }
.visual th svg { position: absolute; left: 6px; bottom: 3px; }
.c1 { width: 253px; }
.c2 { width: 98px; }
.visual tbody tr { height: 24px; }
.visual tbody tr:nth-child(5n) { height: 23px; }
.visual tbody tr:nth-child(even) { background: #edebeb; }
.visual td { padding: 0 6px; }
.visual td:last-child { text-align: right; }
.visual tbody tr.cut { height: 5px; }
.visual tfoot tr { height: 26px; border-top: 2px solid #7ab4ea; color: #222; font-weight: 700; }
.visual tfoot td:last-child { font-size: 16px; }
.thumb { position: absolute; right: 3px; top: 8px; width: 7px; height: 40px; border-radius: 4px; background: #b8b6b4; }
.h { position: absolute; width: 11px; height: 11px; border: 0 solid #a3a1a0; }
.tl { left: -2px; top: -2px; border-width: 4px 0 0 4px; }
.tr { right: -2px; top: -2px; border-width: 4px 4px 0 0; }
.bl { left: -2px; bottom: -2px; border-width: 0 0 4px 4px; }
.br { right: -2px; bottom: -2px; border-width: 0 4px 4px 0; }
.tm { left: 261px; top: -2px; width: 13px; height: 4px; border-top-width: 4px; }
.bm { left: 261px; bottom: -2px; width: 13px; height: 4px; border-top-width: 4px; }
.lm { left: -2px; top: 256px; width: 4px; border-left-width: 4px; }
.rm { right: -2px; top: 256px; width: 4px; border-left-width: 4px; }

.mark { position: absolute; z-index: 3; border: 10px solid #f00; pointer-events: none; }
.mark-name { left: -20px; top: -15px; width: 172px; height: 56px; }
.mark-column { right: 8px; top: -11px; width: 180px; height: 54px; }
.mark-well { left: -17px; bottom: -11px; width: 209px; height: 58px; }

.filters { width: 35px; border-left: 1px solid #b8b6b4; display: flex; flex-direction: column; align-items: center; padding-top: 13px; background: #fff; }
.filters > svg { margin: 16px 0 10px; }
.filters h2 { writing-mode: vertical-rl; font-size: 15px; line-height: 18px; font-weight: 600; color: #222; }

.viz { width: 191px; background: #f3f2f1; border-left: 1px solid #e1dfdd; padding-top: 10px; }
.viz header, .data header { display: flex; justify-content: space-between; align-items: center; padding: 0 8px; }
.viz header h2, .data header h2 { font-size: 16px; line-height: 20px; font-weight: 600; color: #222; }
.viz h3 { padding: 10px 8px 0; font-weight: 600; color: #444; }
.modes { display: flex; justify-content: space-between; padding: 4px 10px 0 9px; height: 38px; }
.modes button { width: 33px; height: 34px; justify-content: center; }
.modes .on { background: #c8c6c4; }
.modes svg { stroke-width: 1.5; }
.pointer { width: 100%; margin-top: -1px; }
.gallery { display: grid; grid-template-columns: repeat(6, 1fr); grid-auto-rows: 1fr; place-items: center; height: 236px; padding: 0 6px; margin-top: 10px; }
.gallery svg { width: 20px; height: 20px; overflow: visible; }
.gallery .picked { outline: 1px solid #333; outline-offset: 2px; }
.gallery .f { fill: #7dbdf2; stroke: #1a6fc0; }
.gallery .g { fill: #bdbbb9; stroke: #777; }
.gallery .w { fill: #fff; }
.gallery .o { fill: #f0a030; stroke: #d06a10; }
.gallery .n { font-size: 9px; fill: #2b7fc4; }
.gallery .r { font-size: 16px; font-weight: 700; fill: #2b7fc4; }

.wells { margin-top: 4px; border-top: 1px solid #dcdad8; padding: 10px 5px 0 4px; }
.wells h4 { padding: 0 8px; }
.wells .strong { padding-top: 16px; font-weight: 600; color: #555; }
.well { position: relative; margin-top: 6px; padding: 3px 3px 5px; border: 1px dashed #b3b0ad; background: #fff; display: grid; gap: 2px; width: 180px; }
.item { display: flex; align-items: center; gap: 7px; height: 24px; padding: 0 4px; background: #edebe9; border: 1px solid #c8c6c4; border-radius: 2px; }
.item svg:first-of-type { margin-left: auto; }
.toggle { display: flex; align-items: center; justify-content: space-between; padding: 0 18px 0 8px; margin-top: 10px; white-space: nowrap; }
.toggle.two { margin-top: 12px; white-space: normal; align-items: flex-start; line-height: 17px; }
.toggle.two span { width: 112px; }
.toggle input { appearance: none; flex: none; width: 34px; height: 17px; margin: 0; border: 1px solid #8a8886; border-radius: 9px; background: #fff; position: relative; }
.toggle input::before { content: ""; position: absolute; left: 4px; top: 3px; width: 9px; height: 9px; border-radius: 50%; background: #605e5c; }
.toggle input:checked { background: #117865; border-color: #117865; }
.toggle input:checked::before { left: 20px; background: #fff; }
.toggle input:checked::after { content: ""; position: absolute; left: 6px; top: 4px; width: 9px; height: 5px; border: solid #fff; border-width: 0 0 2px 2px; transform: rotate(-45deg); }
.drop { margin-top: 10px; width: 180px; height: 28px; padding: 5px 8px; border: 1px dashed #b3b0ad; background: #fff; white-space: nowrap; }

.data { width: 191px; background: #f3f2f1; border-left: 1px solid #dcdad8; padding: 10px 5px 0; }
.data header { padding: 0 3px 0 4px; }
.search { display: flex; align-items: center; gap: 7px; margin-top: 17px; height: 25px; padding-left: 13px; border: 1px solid #d2d0ce; border-bottom-color: #777; border-radius: 4px; background: #fff; }
.search input { width: 100px; border: 0; padding: 0; background: none; font-size: 13px; outline: 0; }
.search input::placeholder { color: #605e5c; opacity: 1; }
.tree { display: grid; grid-auto-rows: 1fr; height: 178px; margin-top: 10px; }
.node { display: flex; align-items: center; padding-left: 8px; }
.node svg:first-child { margin-right: 5px; stroke: #777; }
.node svg:nth-child(2) { margin-right: 1px; }
.leaf { display: flex; align-items: center; padding-left: 41px; border-radius: 3px; }
.leaf i { width: 28px; padding-left: 9px; }
.leaf input { position: relative; appearance: none; width: 13px; height: 13px; margin: 0; border: 1px solid #8a8886; border-radius: 1px; background: #fff; flex: none; }
.leaf input:checked { background: #117865; border-color: #117865; }
.leaf input:checked::after { content: ""; position: absolute; left: 1px; top: 2px; width: 8px; height: 4px; border: solid #fff; border-width: 0 0 1px 1px; transform: rotate(-45deg); }
.selected { background: #e1dfdd; border-left: 4px solid #117865; padding-left: 37px; }
```
